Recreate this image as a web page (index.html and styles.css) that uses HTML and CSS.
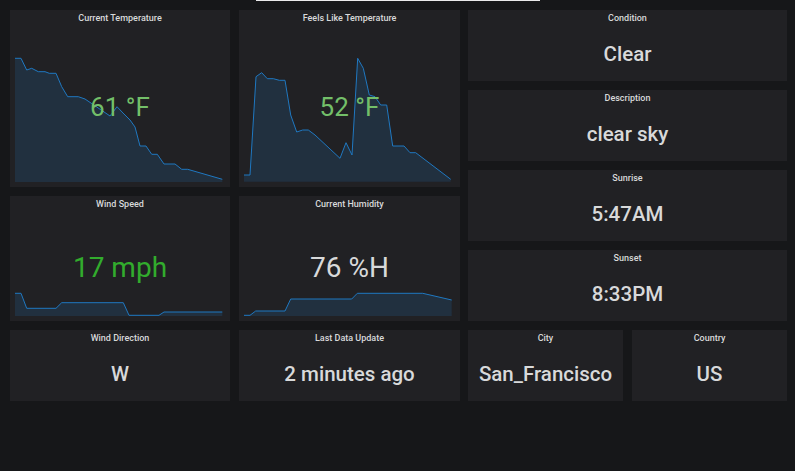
FILE: index.html
```html
<!DOCTYPE html>
<html lang="en">
<head>
<meta charset="utf-8">
<title>Weather Dashboard</title>
<link rel="stylesheet" href="styles.css">
</head>
<body>
<div class="top-strip"></div>
<main class="dashboard">
  <section class="left">
    <div class="panel">
      <svg class="spark" viewBox="0 0 220 177" preserveAspectRatio="none">
        <polygon class="spark-fill" points="5,48.3 11,48.3 16.7,60 21.7,58.3 28.3,61.7 35,61.7 39.3,63.3 46,63.3 51.7,76.7 57.7,86.7 68.3,86.7 75,89 100,106 107,96.7 113,103 120,110 125,117 130,136 136,136 141.7,144.3 147.3,144.3 154,154 165,154 171.7,159.3 177.7,159.3 212.3,169.3 212.3,172 5,172"/>
        <polyline class="spark-line" points="5,48.3 11,48.3 16.7,60 21.7,58.3 28.3,61.7 35,61.7 39.3,63.3 46,63.3 51.7,76.7 57.7,86.7 68.3,86.7 75,89 100,106 107,96.7 113,103 120,110 125,117 130,136 136,136 141.7,144.3 147.3,144.3 154,154 165,154 171.7,159.3 177.7,159.3 212.3,169.3"/>
      </svg>
      <div class="panel-title">Current Temperature</div>
      <div class="panel-value big temp light-green">61 °F</div>
    </div>
    <div class="panel">
      <svg class="spark" viewBox="0 0 221 177" preserveAspectRatio="none">
        <polygon class="spark-fill" points="5,165 11,165 17,66.7 22.7,62.7 28.3,68.7 34.3,68.7 40.3,70.3 46,70.3 51.7,105 57.7,122 63.7,120 69.3,120 76,125 101,148.3 107,132.7 113,145 118.7,48.3 124.3,58.3 130.3,85 136,86.7 141.7,95 147.7,95 153.7,136 165,136 171,142.7 176.7,142.7 211.7,169.3 211.7,171.7 5,171.7"/>
        <polyline class="spark-line" points="5,165 11,165 17,66.7 22.7,62.7 28.3,68.7 34.3,68.7 40.3,70.3 46,70.3 51.7,105 57.7,122 63.7,120 69.3,120 76,125 101,148.3 107,132.7 113,145 118.7,48.3 124.3,58.3 130.3,85 136,86.7 141.7,95 147.7,95 153.7,136 165,136 171,142.7 176.7,142.7 211.7,169.3"/>
      </svg>
      <div class="panel-title">Feels Like Temperature</div>
      <div class="panel-value big temp light-green">52 °F</div>
    </div>
    <div class="panel">
      <svg class="spark" viewBox="0 0 220 125" preserveAspectRatio="none">
        <polygon class="spark-fill" points="5,97.3 11,97.3 16.7,112.3 46,112.3 51.7,106.7 113.3,106.7 119,119.3 149,119.3 154,116 212.3,116 212.3,120 5,120"/>
        <polyline class="spark-line" points="5,97.3 11,97.3 16.7,112.3 46,112.3 51.7,106.7 113.3,106.7 119,119.3 149,119.3 154,116 212.3,116"/>
      </svg>
      <div class="panel-title">Wind Speed</div>
      <div class="panel-value big green">17 mph</div>
    </div>
    <div class="panel">
      <svg class="spark" viewBox="0 0 221 125" preserveAspectRatio="none">
        <polygon class="spark-fill" points="5,119.3 11,119.3 16.7,115 46,115 51.7,103 112.7,103 118.3,97.3 183.7,97.3 212.7,104 212.7,120 5,120"/>
        <polyline class="spark-line" points="5,119.3 11,119.3 16.7,115 46,115 51.7,103 112.7,103 118.3,97.3 183.7,97.3 212.7,104"/>
      </svg>
      <div class="panel-title">Current Humidity</div>
      <div class="panel-value big">76 %H</div>
    </div>
    <div class="panel">
      <div class="panel-title">Wind Direction</div>
      <div class="panel-value">W</div>
    </div>
    <div class="panel">
      <div class="panel-title">Last Data Update</div>
      <div class="panel-value">2 minutes ago</div>
    </div>
  </section>
  <section class="right">
    <div class="panel stat">
      <div class="panel-title">Condition</div>
      <div class="panel-value">Clear</div>
    </div>
    <div class="panel stat">
      <div class="panel-title">Description</div>
      <div class="panel-value">clear sky</div>
    </div>
    <div class="panel stat">
      <div class="panel-title">Sunrise</div>
      <div class="panel-value">5:47AM</div>
    </div>
    <div class="panel stat">
      <div class="panel-title">Sunset</div>
      <div class="panel-value">8:33PM</div>
    </div>
    <div class="pair">
      <div class="panel stat">
        <div class="panel-title">City</div>
        <div class="panel-value">San_Francisco</div>
      </div>
      <div class="panel stat">
        <div class="panel-title">Country</div>
        <div class="panel-value">US</div>
      </div>
    </div>
  </section>
</main>
</body>
</html>
```
FILE: styles.css
```css
* {
  box-sizing: border-box;
}

html, body {
  margin: 0;
  padding: 0;
  background: #161719;
  font-family: Roboto, "Liberation Sans", sans-serif;
  color: #d8d9da;
}

body {
  width: 795px;
  height: 471px;
  overflow: hidden;
}

.top-strip {
  height: 1px;
  width: 284px;
  margin-left: 256px;
  background: #e9e9ea;
}

.dashboard {
  display: flex;
  gap: 8px;
  padding: 9px 0 0 10px;
}

.left {
  display: grid;
  grid-template-columns: 220px 221px;
  grid-template-rows: 177px 125px 71px;
  gap: 9px;
}

.right {
  width: 319px;
  display: flex;
  flex-direction: column;
  gap: 9px;
}

.pair {
  display: flex;
  gap: 9px;
}

.pair .panel {
  flex: 1;
}

.panel {
  position: relative;
  background: #212124;
  display: flex;
  flex-direction: column;
  overflow: hidden;
}

.stat {
  height: 71px;
}

.spark {
  position: absolute;
  left: 0;
  top: 0;
  width: 100%;
  height: 100%;
}

.spark-fill {
  fill: rgba(31, 118, 189, 0.18);
}

.spark-line {
  fill: none;
  stroke: #1f78c1;
  stroke-width: 1;
}

.panel-title {
  position: relative;
  height: 17px;
  padding-top: 2px;
  line-height: 12px;
  font-size: 9px;
  font-weight: 500;
  text-align: center;
  color: #d8d9da;
}

.panel-value {
  position: relative;
  flex: 1;
  display: flex;
  align-items: center;
  justify-content: center;
  font-size: 20.5px;
  font-weight: 500;
  color: #d8d9da;
  white-space: nowrap;
}

.panel-value.big {
  font-size: 28px;
  font-weight: 400;
}

.panel-value.temp {
  font-size: 26px;
}

.light-green {
  color: #73bf69;
}

.green {
  color: #32ac2d;
}
```
